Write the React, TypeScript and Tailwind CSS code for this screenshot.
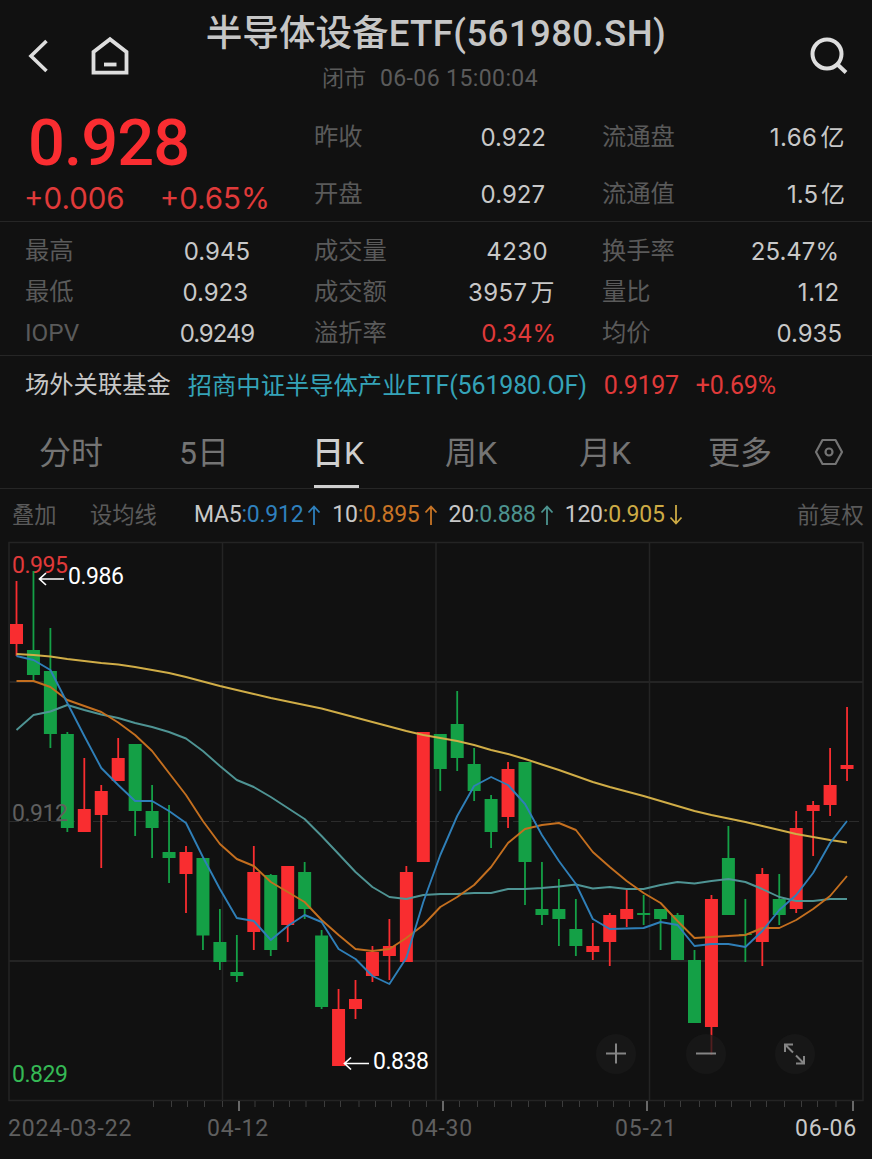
import { clsx } from "clsx";

type Candle = {
  up: boolean;
  high: number;
  top: number;
  bottom: number;
  low: number;
};

const RED = "#f92d30";
const GREEN = "#14a046";
const GRID = "#242424";

const FIRST_X = 16.5;
const STEP = 16.95;

// direction, high, body top, body bottom, low
const RAW: [number, number, number, number, number][] = [
  [1, 581, 624, 644, 656],
  [0, 571, 650, 675, 681],
  [0, 628, 671, 734, 748],
  [0, 732, 734, 828, 832],
  [1, 758, 809, 832, 832],
  [1, 785, 791, 815, 868],
  [1, 738, 758, 781, 781],
  [0, 744, 744, 811, 836],
  [0, 785, 811, 828, 858],
  [0, 805, 852, 858, 883],
  [1, 846, 852, 874, 913],
  [0, 858, 858, 935.5, 950],
  [0, 909, 942, 962, 970],
  [0, 935, 972, 976, 982],
  [1, 846, 872, 932, 950],
  [0, 874, 875, 950, 956],
  [1, 866, 866, 925, 942],
  [0, 862, 872, 909, 919],
  [0, 930, 935.5, 1007, 1009],
  [1, 989, 1009, 1066, 1066],
  [1, 980, 999, 1009, 1019],
  [1, 946, 952, 976, 982],
  [1, 919, 946, 956, 980],
  [1, 866, 872, 962, 962],
  [1, 732, 732, 862, 862],
  [0, 734, 734, 769, 791],
  [0, 691, 724, 758, 771],
  [0, 748, 764, 791, 801],
  [0, 795, 799, 832, 848],
  [1, 762, 769, 817, 828],
  [0, 762, 762, 862, 905],
  [0, 862, 909, 915, 925],
  [0, 879, 909, 919, 946],
  [0, 899, 929, 946, 956],
  [1, 923, 946, 952, 960],
  [1, 913, 915, 942, 966],
  [1, 890, 909, 919, 927],
  [0, 895, 913, 915, 925],
  [0, 909, 909, 919, 950],
  [0, 913, 915, 960, 960],
  [0, 950, 960, 1023, 1023],
  [1, 895, 899, 1027, 1055],
  [0, 826, 858, 915, 915],
  [0, 899, 934, 935, 962],
  [1, 868, 874, 942, 966],
  [0, 874, 899, 915, 925],
  [1, 811, 828, 909, 913],
  [1, 801, 805, 811, 856],
  [1, 748, 785, 805, 816],
  [1, 707, 765, 769, 781],
];

const candles: Candle[] = RAW.map(([up, high, top, bottom, low]) => ({ up: up === 1, high, top, bottom, low }));

const averages = [
  {
    color: "#d0ad47",
    ys: [
      654, 655, 656.5, 659, 661, 663, 664.5, 667, 670, 673, 677, 681.5, 686, 690, 694, 698, 701.5, 705, 708.5, 713,
      717.5, 722, 726.5, 731, 735, 738, 741, 745, 750, 754, 759, 764.5, 770, 776, 782, 787, 791.5, 796, 801, 806, 811,
      815, 818.5, 822, 826, 830, 834, 837, 840, 842.5,
    ],
  },
  {
    color: "#4f9494",
    ys: [
      730, 715, 711.5, 705, 710, 714.5, 718, 723, 727, 732, 738.5, 751, 766, 780, 787, 797, 808, 819, 836, 854, 872,
      887, 897, 899, 895, 894, 894, 893, 893, 889, 889, 888, 886.5, 884.5, 888.5, 887, 889, 889, 885, 882, 883.5, 881,
      879, 882, 889, 897, 901, 901, 899, 899,
    ],
  },
  {
    color: "#c46f1f",
    ys: [
      681, 681, 687, 700, 706, 712, 722.5, 735, 751, 773, 795, 821, 844, 859, 866, 882, 892, 902, 920, 935, 949, 951,
      949, 938, 925, 907, 897, 885, 867, 843, 829, 825, 823, 830, 852, 867, 881, 893, 903, 921, 938, 937, 936, 935, 928,
      928, 920, 909, 896, 876,
    ],
  },
  {
    color: "#2f7fb8",
    ys: [
      656, 660, 670, 703, 736, 768, 785, 801, 801, 811, 823, 857, 889, 918, 921, 940, 926, 915, 922, 949, 959, 976, 984,
      958, 902, 855, 816, 786, 777, 785, 804, 835, 861, 884, 919, 929, 928.5, 928, 922, 925, 946, 944, 944, 947, 931,
      910, 895, 873, 843, 821,
    ],
  },
];

const minorTicks = [
  153.5, 171.5, 187.5, 204.5, 222.5, 255, 273.5, 289.5, 306, 324.5, 340.5, 359, 375.5, 391.5, 409.5, 426.5, 459.5, 477.5,
  494.5, 511.5, 528.5, 545.5, 562.5, 579.5, 597.5, 613.5, 629.5, 664.5, 680.5, 699.5, 715.5, 731.5, 750.5, 766.5, 784.5,
  801.5, 817.5, 836,
];
const majorTicks = [239, 443, 647, 853];

const xAt = (i: number) => FIRST_X + i * STEP;
const toPoints = (ys: number[]) => ys.map((y, i) => `${xAt(i).toFixed(1)},${y}`).join(" ");

const sans = "font-[Roboto,'Noto_Sans_CJK_SC',sans-serif]";
const wide = "font-[Inter,'Noto_Sans_CJK_SC',sans-serif]";

const BackIcon = () => (
  <svg width="24" height="36" viewBox="0 0 24 36" fill="none" stroke="#dedede" strokeWidth="3.6">
    <path d="M21.5 3 6 18 21.5 33" />
  </svg>
);

const HomeIcon = () => (
  <svg width="40" height="42" viewBox="0 0 40 42" fill="none" stroke="#dedede" strokeWidth="3.8">
    <path d="M3.5 38.7V18L20 5.2 36.5 18V38.700Z" />
    <path d="M14 30.5H26.5" />
  </svg>
);

const SearchIcon = () => (
  <svg width="40" height="40" viewBox="0 0 40 40" fill="none" stroke="#dedede" strokeWidth="4">
    <circle cx="18" cy="18" r="14.5" />
    <path d="M28 28 37 36.5" />
  </svg>
);

const Header = () => (
  <header className="flex h-[109px] justify-between">
    <div className="flex w-[200px] gap-[41px] pl-[25px] pt-[34px]">
      <div className="pt-[4px]">
        <BackIcon />
      </div>
      <HomeIcon />
    </div>
    <div className="flex flex-col items-center whitespace-nowrap">
      <h1 className={clsx(sans, "mt-[7px] h-[53px] text-[36.6px] font-medium leading-[54px] text-[#c6c6c6]")}>
        半导体设备<span className="tracking-[0.4px]">ETF(561980.SH)</span>
      </h1>
      <p
        className={clsx(sans, "mr-[12px] mt-[3px] flex h-[32px] gap-[14px] text-[22px] leading-[32px] text-[#5b5b5b]")}
      >
        <span>闭市</span>
        <span className="text-[23px] tracking-[0.4px]">06-06 15:00:04</span>
      </p>
    </div>
    <div className="flex w-[200px] justify-end pr-[23px] pt-[36px]">
      <SearchIcon />
    </div>
  </header>
);

interface StatProps {
  label: string;
  value: string;
  unit?: string;
  pad: string;
  className?: string;
}

const Stat = ({ label, value, unit, pad, className }: StatProps) => (
  <div className={clsx("flex items-center justify-between whitespace-nowrap text-[24.3px]", pad)}>
    <span className={clsx(sans, "text-[#5a5a5a]")}>{label}</span>
    <span className={clsx(wide, "text-[24px]", className ?? "text-[#c8c8c8]")}>
      {value}
      {unit && <span className="ml-[3px]">{unit}</span>}
    </span>
  </div>
);

const Quote = () => (
  <section className="flex h-[113px] border-b border-[#262626]">
    <div className="w-[314px]">
      <div className={clsx(sans, "pl-[28px] text-[65px] font-medium leading-[69px] tracking-[-0.9px] text-[#fa2d31]")}>
        0.928
      </div>
      <div className={clsx(wide, "flex gap-[35px] pl-[24px] text-[29.5px] leading-[41px] text-[#e03a3a]")}>
        <span>+0.006</span>
        <span>+0.65%</span>
      </div>
    </div>
    <div className="grid w-[558px] grid-cols-[288px_270px] grid-rows-[57px_57px]">
      <Stat label="昨收" value="0.922" pad="pr-[56px]" />
      <Stat label="流通盘" value="1.66" unit="亿" pad="pr-[27px]" className="text-[#c8c8c8] tracking-[0.5px]" />
      <Stat label="开盘" value="0.927" pad="pr-[57px]" />
      <Stat label="流通值" value="1.5" unit="亿" pad="pr-[27px]" />
    </div>
  </section>
);

const Details = () => (
  <section className="grid h-[134px] grid-cols-[289px_288px_270px] grid-rows-[41px_41px_41px] border-b border-[#262626] pl-[25px] pt-[9px]">
    <Stat label="最高" value="0.945" pad="pr-[64px]" />
    <Stat label="成交量" value="4230" pad="pr-[54px]" className="text-[#c8c8c8] tracking-[0.4px]" />
    <Stat label="换手率" value="25.47%" pad="pr-[33px]" />
    <Stat label="最低" value="0.923" pad="pr-[66px]" />
    <Stat label="成交额" value="3957" unit="万" pad="pr-[47px]" className="text-[#c8c8c8] tracking-[0.4px]" />
    <Stat label="量比" value="1.12" pad="pr-[32px]" className="text-[#c8c8c8] tracking-[0.8px]" />
    <Stat label="IOPV" value="0.9249" pad="pr-[60px]" className="text-[#c8c8c8] tracking-[-1.1px]" />
    <Stat label="溢折率" value="0.34%" pad="pr-[46px]" className="text-[#e03a3a]" />
    <Stat label="均价" value="0.935" pad="pr-[30px]" />
  </section>
);

const RelatedFund = () => (
  <section
    className={clsx(sans, "flex h-[58px] items-center whitespace-nowrap pl-[25px] pt-px text-[24.3px] text-[#c8c8c8]")}
  >
    <span>场外关联基金</span>
    <span className="ml-[17px] text-[#35a3b8]">
      招商中证半导体产业<span className="text-[25px] tracking-[-0.15px]">ETF(561980.OF)</span>
    </span>
    <span className="ml-[17px] text-[25px] tracking-[-0.3px] text-[#e03a3a]">0.9197</span>
    <span className="ml-[17px] text-[25px] tracking-[-0.2px] text-[#e03a3a]">+0.69%</span>
  </section>
);

const tabs = [
  { label: "分时", box: "ml-[39px] w-[140px]" },
  { label: "5日", box: "w-[135px]" },
  { label: "日K", box: "w-[131px]" },
  { label: "周K", box: "w-[134px]" },
  { label: "月K", box: "w-[129px]" },
  { label: "更多", box: "w-[106px]" },
];

const Tabs = () => (
  <nav className={clsx(sans, "flex h-[75px] border-b border-[#262626] text-[32px] text-[#747474]")}>
    {tabs.map(({ label, box }) => {
      const active = label === "日K";
      return (
        <div key={label} className={clsx("flex flex-col justify-between whitespace-nowrap", box)}>
          <span className={clsx("pt-[15px] leading-[48px]", active && "-ml-[2px] font-medium text-[#cfcfcf]")}>
            {active ? (
              <>
                日<span className="font-normal">K</span>
              </>
            ) : (
              label
            )}
          </span>
          {active && <span className="h-[3px] w-[45px] bg-[#cfcfcf]" />}
        </div>
      );
    })}
    <svg className="mt-[24px]" width="30" height="28" viewBox="0 0 30 28" fill="none" stroke="#747474" strokeWidth="2.2">
      <path d="M8.5 2H21.5L28 14 21.5 26H8.5L2 14Z" strokeLinejoin="round" />
      <circle cx="15" cy="14" r="3.5" />
    </svg>
  </nav>
);

interface AverageProps {
  name: string;
  value: string;
  color: string;
  down?: boolean;
}

const Average = ({ name, value, color, down }: AverageProps) => (
  <span className={clsx("flex items-center", color)}>
    <span className="text-[#c8c8c8]">{name}</span>:{value}
    <svg
      className={clsx("mb-[2px] ml-[4px]", down && "rotate-180")}
      width="14"
      height="22"
      viewBox="0 0 14 22"
      fill="none"
      stroke="currentColor"
      strokeWidth="1.8"
    >
      <path d="M7 21V3M1.5 8.5 7 2.5 12.5 8.5" />
    </svg>
  </span>
);

const AverageBar = () => (
  <div className={clsx(sans, "flex h-[46px] items-center whitespace-nowrap pt-[7px] text-[22.3px] text-[#5a5a5a]")}>
    <span className="ml-[12px] w-[78px]">叠加</span>
    <span className="w-[104px]">设均线</span>
    <div className="flex w-[603px] gap-[11px] text-[23px] tracking-[-0.25px]">
      <Average name="MA5" value="0.912" color="text-[#2f80bd]" />
      <Average name="10" value="0.895" color="text-[#c87526]" />
      <Average name="20" value="0.888" color="text-[#4d9490]" />
      <Average name="120" value="0.905" color="text-[#cdab45]" down />
    </div>
    <span>前复权</span>
  </div>
);

const Chart = () => (
  <svg
    className="block font-[Roboto,sans-serif] text-[23px]"
    width="872"
    height="580"
    viewBox="0 535 872 580"
    fill="none"
  >
    <g stroke={GRID} strokeWidth="1.5">
      <path d="M9 542.5H863V1100.5H9Z" />
      <path d="M222.5 543V1100M436 543V1100M649.5 543V1100" />
      <path d="M9 682H863M9 961H863" strokeWidth="2" />
      <path d="M9 821.5H863" strokeWidth="1" strokeDasharray="10 4" stroke="#2c2c2c" />
    </g>
    <g stroke="#3c3c3c">
      {minorTicks.map((x) => (
        <path key={x} d={`M${x} 1101V1107`} />
      ))}
    </g>
    <g stroke="#686868" strokeWidth="2">
      {majorTicks.map((x) => (
        <path key={x} d={`M${x} 1101V1111`} />
      ))}
    </g>
    <text x="12" y="572.5" fill="#e03a3a" textLength="56">
      0.995
    </text>
    {candles.map((c, i) => {
      const color = c.up ? RED : GREEN;
      return (
        <g key={i}>
          <path d={`M${xAt(i)} ${c.high}V${c.low}`} stroke={color} strokeWidth="1.8" />
          <rect x={xAt(i) - 6.5} y={c.top} width="13" height={c.bottom - c.top} fill={color} />
        </g>
      );
    })}
    {averages.map(({ color, ys }) => (
      <polyline key={color} points={toPoints(ys)} stroke={color} strokeWidth="1.9" strokeLinejoin="round" />
    ))}
    <text x="12" y="821" fill="#5f5f5f" textLength="56">
      0.912
    </text>
    <text x="12" y="1082" fill="#35b955" textLength="56">
      0.829
    </text>
    <g stroke="#ffffff" strokeWidth="1.7">
      <path d="M64 579H40M46 573 39.5 579 46 585" />
      <path d="M369 1063.5H345M351 1057.5 344.5 1063.5 351 1069.5" />
    </g>
    <g fill="#ffffff">
      <text x="68" y="584" textLength="56">
        0.986
      </text>
      <text x="373" y="1069" textLength="56">
        0.838
      </text>
    </g>
  </svg>
);

const controls = [
  { name: "zoom in", path: "M10 19.5H30M20 9.5V29.5" },
  { name: "zoom out", path: "M10 19.5H30" },
  { name: "expand", path: "M18 18.5 10.5 11M10 18V10.5H18M21 21.5 28.5 29M29 22V29.5H21" },
];

const ChartControls = () => (
  <div className="absolute left-[596px] top-[499px] flex gap-[49.5px]">
    {controls.map(({ name, path }) => (
      <button key={name} aria-label={name} className="h-[40px] w-[40px] rounded-full bg-[#191919]/75">
        <svg width="40" height="40" viewBox="0 0 40 40" fill="none" stroke="#858585" strokeWidth="2">
          <path d={path} />
        </svg>
      </button>
    ))}
  </div>
);

const DateAxis = () => (
  <div className={clsx(sans, "flex h-[44px] whitespace-nowrap pl-[8px] text-[23px] leading-[27px] text-[#5f5f5f]")}>
    <span className="w-[199px] tracking-[0.8px]">2024-03-22</span>
    <span className="w-[204px] tracking-[0.8px]">04-12</span>
    <span className="w-[204px] tracking-[0.8px]">04-30</span>
    <span className="w-[180px] tracking-[0.8px]">05-21</span>
    <span className="tracking-[0.8px] text-[#c8c8c8]">06-06</span>
  </div>
);

const App = () => (
  <main className="h-[1159px] w-[872px] overflow-hidden bg-[#111111]">
    <Header />
    <Quote />
    <Details />
    <RelatedFund />
    <Tabs />
    <AverageBar />
    <div className="relative">
      <Chart />
      <ChartControls />
    </div>
    <DateAxis />
  </main>
);

export default App;
